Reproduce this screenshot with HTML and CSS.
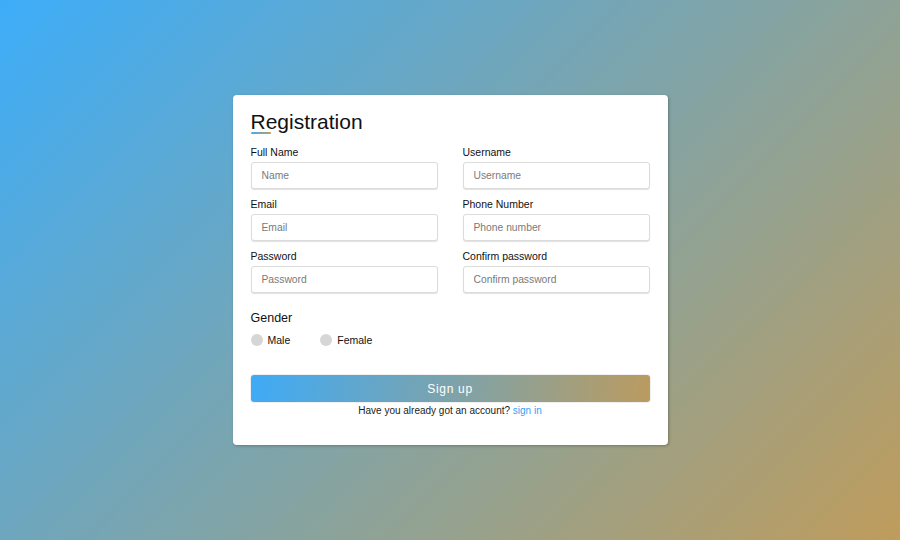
FILE: index.html
```html
<!DOCTYPE html>
<html lang="en">
<head>
<meta charset="utf-8">
<title>Registration</title>
<link rel="stylesheet" href="styles.css">
</head>
<body>
<div class="card">
  <h1 class="title">Registration</h1>
  <form class="form">
    <div class="grid">
      <div class="field">
        <label class="label">Full Name</label>
        <input class="input" type="text" placeholder="Name">
      </div>
      <div class="field">
        <label class="label">Username</label>
        <input class="input" type="text" placeholder="Username">
      </div>
      <div class="field">
        <label class="label">Email</label>
        <input class="input" type="text" placeholder="Email">
      </div>
      <div class="field">
        <label class="label">Phone Number</label>
        <input class="input" type="text" placeholder="Phone number">
      </div>
      <div class="field">
        <label class="label">Password</label>
        <input class="input" type="text" placeholder="Password">
      </div>
      <div class="field">
        <label class="label">Confirm password</label>
        <input class="input" type="text" placeholder="Confirm password">
      </div>
    </div>
    <div class="gender">
      <div class="gender-title">Gender</div>
      <div class="radios">
        <span class="radio"><span class="dot"></span>Male</span>
        <span class="radio"><span class="dot"></span>Female</span>
      </div>
    </div>
    <button class="btn" type="button">Sign up</button>
    <p class="signin">Have you already got an account? <a href="#" class="link">sign in</a></p>
  </form>
</div>
</body>
</html>
```
FILE: styles.css
```css
html, body {
  margin: 0;
  padding: 0;
}
body {
  width: 900px;
  height: 540px;
  display: flex;
  align-items: center;
  justify-content: center;
  background: linear-gradient(135deg, #3dadf9 0%, #bf9c5c 100%);
  font-family: "Liberation Sans", Arial, sans-serif;
  color: #111;
}
.card {
  box-sizing: border-box;
  width: 435px;
  height: 350px;
  background: #fff;
  border-radius: 4px;
  padding: 14px 18px 0 18px;
  box-shadow: 1px 1px 3px rgba(0, 0, 0, 0.25);
}
.title {
  position: relative;
  margin: 0;
  font-size: 21px;
  line-height: 26px;
  font-weight: 400;
  color: #111;
}
.title::after {
  content: "";
  position: absolute;
  left: 0;
  bottom: 1px;
  width: 20px;
  height: 2px;
  border-radius: 1px;
  background: linear-gradient(to right, #3dadf9, #bf9c5c);
}
.form {
  margin-top: 10px;
}
.grid {
  display: grid;
  grid-template-columns: 1fr 1fr;
  column-gap: 25px;
  row-gap: 8px;
}
.field {
  display: flex;
  flex-direction: column;
  gap: 3px;
}
.label {
  font-size: 10.5px;
  line-height: 14px;
  color: #111;
}
.input {
  box-sizing: border-box;
  height: 27px;
  width: 100%;
  border: 1px solid #dcdcdc;
  border-radius: 3px;
  padding: 0 10px;
  font-family: "Liberation Sans", Arial, sans-serif;
  font-size: 10.3px;
  color: #333;
  box-shadow: 0 1px 1px rgba(0, 0, 0, 0.12);
  outline: none;
}
.input::placeholder {
  color: #7a7a7a;
}
.gender {
  margin-top: 16px;
}
.gender-title {
  font-size: 12.5px;
  line-height: 18px;
  color: #111;
}
.radios {
  margin-top: 6px;
  display: flex;
  gap: 30px;
}
.radio {
  display: flex;
  align-items: center;
  gap: 5px;
  font-size: 10.5px;
  line-height: 14px;
  color: #111;
}
.dot {
  width: 12px;
  height: 12px;
  border-radius: 50%;
  background: #d6d6d6;
}
.btn {
  display: block;
  box-sizing: border-box;
  margin-top: 28px;
  width: 100%;
  height: 27px;
  border: none;
  border-radius: 3px;
  background: linear-gradient(100deg, #3eabf7 0%, #bb9b5f 100%);
  color: #fff;
  font-family: "Liberation Sans", Arial, sans-serif;
  font-size: 12px;
  letter-spacing: 0.7px;
  box-shadow: 0 0 0 1px rgba(0, 0, 0, 0.06);
}
.signin {
  margin: 2px 0 0 0;
  text-align: center;
  font-size: 10px;
  line-height: 14px;
  color: #222;
}
.link {
  color: #2ea4f3;
  text-decoration: none;
}
```
